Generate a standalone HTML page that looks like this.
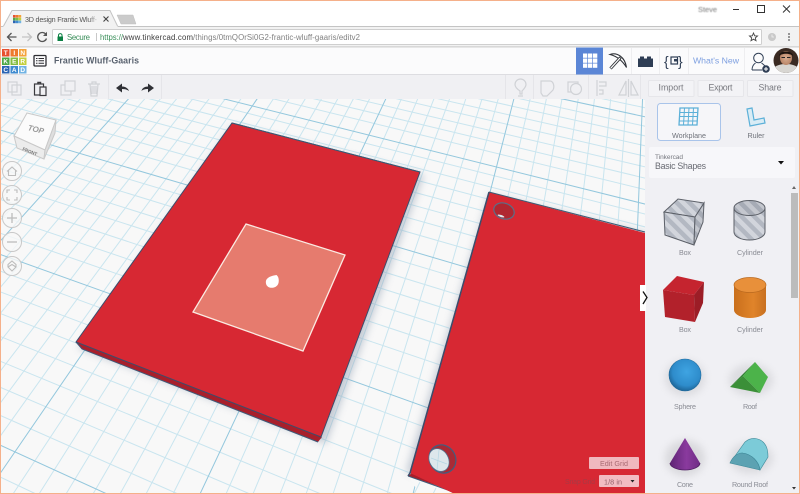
<!DOCTYPE html>
<html><head><meta charset="utf-8"><title>3D design Frantic Wluff-Gaaris</title>
<style>
html,body{margin:0;padding:0;background:#fff;width:800px;height:494px;overflow:hidden}
svg{display:block}
text{font-family:"Liberation Sans",sans-serif;white-space:pre}
</style></head><body>
<svg width="800" height="494" viewBox="0 0 800 494" xmlns="http://www.w3.org/2000/svg">
<defs>
<filter id="b6" x="-30%" y="-30%" width="160%" height="160%"><feGaussianBlur stdDeviation="4"/></filter>
<filter id="b3" x="-50%" y="-50%" width="200%" height="200%"><feGaussianBlur stdDeviation="4"/></filter>
<filter id="bt"><feGaussianBlur stdDeviation="0.5"/></filter>
<pattern id="st" width="9" height="9" patternUnits="userSpaceOnUse" patternTransform="rotate(-45)"><rect width="9" height="9" fill="#d2d5dc"/><rect width="4.500" height="9" fill="#b3b8c2"/></pattern>
<pattern id="st2" width="9" height="9" patternUnits="userSpaceOnUse" patternTransform="rotate(-45)"><rect width="9" height="9" fill="#c4c7ce"/><rect width="4.500" height="9" fill="#a6abb5"/></pattern>
<radialGradient id="sph" cx="0.55" cy="0.4" r="0.62"><stop offset="0" stop-color="#3fa4e2"/><stop offset="0.7" stop-color="#2e8ccb"/><stop offset="1" stop-color="#1c6293"/></radialGradient>
<linearGradient id="con" x1="0" x2="1" y1="0" y2="0"><stop offset="0" stop-color="#5e2474"/><stop offset="0.55" stop-color="#8a3a9e"/><stop offset="1" stop-color="#6f2c85"/></linearGradient>
<linearGradient id="cyl" x1="0" x2="1" y1="0" y2="0"><stop offset="0" stop-color="#c96f1c"/><stop offset="0.6" stop-color="#e0842a"/><stop offset="1" stop-color="#c87020"/></linearGradient>
<linearGradient id="fade" x1="0" x2="1" y1="0" y2="0"><stop offset="0" stop-color="#f2f2f2" stop-opacity="0"/><stop offset="1" stop-color="#f2f2f2"/></linearGradient>
<radialGradient id="face" cx="0.5" cy="0.5" r="0.5"><stop offset="0" stop-color="#d8ad90"/><stop offset="1" stop-color="#b98568"/></radialGradient>
<clipPath id="av"><circle cx="786" cy="60.500" r="12.500"/></clipPath>
</defs>

<!-- canvas -->
<rect width="800" height="494" fill="#f8f8f8"/>
<path fill="none" stroke="#c9e5ef" stroke-width="1" d="M666-497L-441 494M666-497L-415 494M666-497L-388 494M666-497L-362 494M666-497L-334 494M666-497L-308 494M666-497L-281 494M666-497L-254 494M666-497L-201 494M666-497L-175 494M666-497L-148 494M666-497L-121 494M666-497L-94 494M666-497L-67 494M666-497L-41 494M666-497L13 494M666-497L39 494M666-497L66 494M666-497L93 494M666-497L120 494M666-497L146 494M666-497L173 494M666-497L226 494M666-497L253 494M666-497L280 494M666-497L306 494M666-497L333 494M666-497L360 494M666-497L387 494M666-497L440 494M666-497L467 494M666-497L493 494M666-497L520 494M666-497L547 494M666-497L574 494M666-497L600 494M666-497L654 494M666-497L680 494
M-1938-441L-36 494M-1938-441L36 494M-1938-441L178 494M-1938-441L250 494M-1938-441L321 494M-1938-441L393 494M-1938-441L464 494M-1938-441L535 494M-1938-441L607 494M-1938-441L750 494M-1938-441L821 494M-1938-441L892 494M-1938-441L964 494M-1938-441L1035 494M-1938-441L1107 494M-1938-441L1178 494M-1938-441L1321 494M-1938-441L1392 494M-1938-441L1464 494M-1938-441L1535 494M-1938-441L1606 494M-1938-441L1678 494M-1938-441L1749 494M-1938-441L1892 494M-1938-441L1963 494M-1938-441L2035 494M-1938-441L2106 494M-1938-441L2178 494M-1938-441L2249 494M-1938-441L2320 494M-1938-441L2463 494M-1938-441L2535 494M-1938-441L2606 494M-1938-441L2677 494"/>
<path fill="none" stroke="#93c7dd" stroke-width="1" d="M666-497L-228 494M666-497L-14 494M666-497L200 494M666-497L413 494M666-497L627 494M-1938-441L107 494M-1938-441L668 494M-1938-441L1236 494M-1938-441L1806 494M-1938-441L2392 494"/>

<!-- shadows -->
<polygon points="232,126 424,175 326,444 78,348" fill="#7f8fa6" opacity=".42" filter="url(#b6)"/>
<polygon points="489,194 650,234 650,494 470,494 406,472" fill="#7f8fa6" opacity=".42" filter="url(#b6)"/>

<!-- left plate -->
<polygon points="76,342 82,349 318,442 322,437" fill="#a81f2b"/>
<path d="M76,342 L82,349 L318,442" fill="none" stroke="#3f5a78" stroke-width="1"/>
<polygon points="232,123 420,172 321,437 76,342" fill="#d72833" stroke="#3b4d6c" stroke-width="1"/>
<path d="M232,123 L420,172" stroke="#3a5a74" stroke-width="1"/>
<polygon points="246,224 345,255 303,351 193,312" fill="#e67b6e" stroke="#fbeae2" stroke-width="1.300"/>
<path d="M276.500,275 C279,277 279,280.500 278.500,283 C277.500,287 273,288.500 269.500,287.500 C266,286.500 265,282 266.500,279.500 C268.500,276.500 273,275.500 276.500,275Z" fill="#fff"/>

<!-- right plate -->
<polygon points="408,476 462,494 420,494" fill="#f8f8f8"/>
<path d="M420 482L414 494M436 488L433 494" stroke="#c9e5ef" stroke-width="1"/>
<polygon points="408,476 412,473 455,494 462,494" fill="#a81f2b"/>
<path d="M408,476 L459,494" stroke="#3f5a78" stroke-width="1" fill="none"/>
<polygon points="489,192 645,233 645,494 455,494 410,473" fill="#d72833"/>
<path d="M489,192 L410,473 L408,476" fill="none" stroke="#3b4d6c" stroke-width="1.500"/>
<path d="M489,192 L645,232" fill="none" stroke="#3a5a74" stroke-width="1"/>
<g transform="rotate(20 504 211)"><ellipse cx="504" cy="211" rx="10.500" ry="7.800" fill="#b02731" stroke="#5a6f88" stroke-width="1.200"/></g>
<ellipse cx="501" cy="216" rx="3.500" ry="1" transform="rotate(18 501 216)" fill="#dfe9ee"/>
<ellipse cx="442.500" cy="459" rx="13" ry="14.500" transform="rotate(-30 442.500 459)" fill="#a92a35" stroke="#3f5f80" stroke-width="1.200"/>
<ellipse cx="439" cy="460" rx="9.500" ry="12" transform="rotate(-30 439 460)" fill="#dde7ec" stroke="#55708c" stroke-width=".800"/>
<path d="M439 450L437 470M431 458L447 464" stroke="#b5d6e4" stroke-width=".700"/>

<!-- grid controls -->
<rect x="589" y="457" width="50" height="12" rx="1" fill="#f0b8be"/>
<text x="614" y="466" font-size="7.200" fill="#a86a72" text-anchor="middle" textLength="28">Edit Grid</text>
<text x="565" y="484" font-size="7" fill="#a83a45" textLength="30">Snap Grid</text>
<rect x="599" y="475" width="40" height="12" rx="1" fill="#f2bcc2"/>
<text x="604" y="484.500" font-size="7.200" fill="#94606a" textLength="18">1/8 in</text>
<path d="M630.500 480h4l-2 2.500z" fill="#222"/>

<!-- view cube -->
<polygon points="27,113 56,120 45,150 14,136" fill="#fbfbfb" stroke="#c9c9c9" stroke-width="1"/>
<polygon points="14,136 45,150 44,159 17,148" fill="#ececec" stroke="#c9c9c9" stroke-width="1"/>
<polygon points="56,120 45,150 44,159 55,133" fill="#dedede" stroke="#c9c9c9" stroke-width="1"/>
<text x="36" y="132" font-size="8" font-style="italic" font-weight="bold" fill="#9a9a9a" text-anchor="middle" transform="rotate(14 36 129)">TOP</text>
<text x="30" y="153" font-size="4.500" font-weight="bold" fill="#777" text-anchor="middle" transform="rotate(22 30 151)">FRONT</text>

<!-- nav circles -->
<g fill="#f8f8f8" fill-opacity=".8" stroke="#c8c8c8" stroke-width="1">
<circle cx="12" cy="171" r="9.500"/><circle cx="12" cy="195" r="9.500"/><circle cx="12" cy="218" r="9.500"/><circle cx="12" cy="242" r="9.500"/><circle cx="12" cy="266" r="9.500"/>
</g>
<g fill="none" stroke="#bcbcbc" stroke-width="1.100">
<path d="M7 171.500L12 167L17 171.500M8.500 170.500V175.500H15.500V170.500"/>
<path d="M7 193V190H10M14 190H17V193M17 197V200H14M10 200H7V197"/>
<path d="M7 218H17M12 213V223" stroke-width="1.300"/>
<path d="M7 242H17" stroke-width="1.300"/>
<path d="M12 261L16 264.500V267L12 271L8 267V264.500ZM8 267L12 264.500L16 267"/>
</g>

<!-- right panel -->
<rect x="645" y="99" width="155" height="395" fill="#f0f0f4"/>
<rect x="640" y="285" width="6" height="26" fill="#fff"/>
<path d="M643 291.500L647 297.500L643 304" fill="none" stroke="#111" stroke-width="1.300"/>
<rect x="657.500" y="103.500" width="63" height="37" rx="3" fill="#f6f6f9" stroke="#a9c4ea" stroke-width="1"/>
<g fill="none" stroke="#5cb0d8" stroke-width="1">
<polygon points="680,108 698,108 697,125 679,125" stroke-width="1.300"/>
<path d="M684.500 108L683.500 125M689 108L688 125M693.500 108L692.500 125M680 112.500H698M680 116.500H697.500M679.500 121H697"/>
</g>
<path d="M747 109L752 108L754 120L764 118L765 123L750 126Z" fill="#d9ecf5" stroke="#5cb0d8" stroke-width="1.200"/>
<text x="689" y="138" font-size="7.200" fill="#6f727a" text-anchor="middle" textLength="34">Workplane</text>
<text x="756" y="138" font-size="7.200" fill="#6f727a" text-anchor="middle" textLength="17">Ruler</text>
<rect x="649" y="147" width="146" height="31" rx="2" fill="#f7f7fa"/>
<text x="655" y="159" font-size="6.500" fill="#75777e" textLength="28">Tinkercad</text>
<text x="655" y="169" font-size="8.800" fill="#686a72" textLength="51">Basic Shapes</text>
<path d="M778 161h6l-3 3.500z" fill="#111"/>
<path d="M792 189l2-3 2 3z" fill="#666"/>
<path d="M792 487l2 2.500 2-2.500z" fill="#333"/>
<rect x="791" y="193" width="7" height="105" fill="#bcbcbc"/>

<!-- shapes -->
<g stroke="#5c6068" stroke-width="1">
<polygon points="664,212 678,199 704,203 695,217" fill="url(#st)"/>
<polygon points="664,212 695,217 694,245 665,235" fill="url(#st)"/>
<polygon points="695,217 704,203 703,222 694,245" fill="url(#st2)"/>
<path d="M734 208V232A15.500 8 0 0 0 765 232V208Z" fill="url(#st)"/>
<ellipse cx="749.500" cy="208" rx="15.500" ry="7.500" fill="url(#st2)"/>
</g>
<text x="685" y="255" font-size="7.200" fill="#8a8c94" text-anchor="middle" textLength="12">Box</text>
<text x="750" y="255" font-size="7.200" fill="#8a8c94" text-anchor="middle" textLength="26">Cylinder</text>

<polygon points="663,290 677,276 704,282 694,295" fill="#c5242f"/>
<polygon points="663,290 694,295 695,322 665,317" fill="#b2212b"/>
<polygon points="694,295 704,282 703,303 695,322" fill="#9c1d26"/>
<path d="M734 285V310A16 8 0 0 0 766 310V285Z" fill="url(#cyl)"/>
<ellipse cx="750" cy="285" rx="16" ry="7.500" fill="#e8903a" stroke="#b9691f" stroke-width=".700"/>
<text x="685" y="332" font-size="7.200" fill="#8a8c94" text-anchor="middle" textLength="12">Box</text>
<text x="750" y="332" font-size="7.200" fill="#8a8c94" text-anchor="middle" textLength="26">Cylinder</text>

<ellipse cx="685" cy="378" rx="20" ry="18" fill="#dcdce0" filter="url(#b3)"/>
<circle cx="685" cy="375" r="16" fill="url(#sph)" stroke="#1f6a9c" stroke-width=".600"/>
<ellipse cx="751" cy="380" rx="22" ry="16" fill="#dcdce0" filter="url(#b3)"/>
<polygon points="730,387 755,362 743,376" fill="#2f7f30"/>
<polygon points="743,376 755,362 768,377 760,393" fill="#4cb34a"/>
<polygon points="730,387 743,376 760,393" fill="#3b8f38"/>
<text x="685" y="409" font-size="7.200" fill="#8a8c94" text-anchor="middle" textLength="22">Sphere</text>
<text x="750" y="409" font-size="7.200" fill="#8a8c94" text-anchor="middle" textLength="14">Roof</text>

<ellipse cx="685" cy="458" rx="20" ry="18" fill="#d9d9dd" filter="url(#b3)"/>
<path d="M685 438L670 463A15 7 0 0 0 700 463Z" fill="url(#con)"/>
<path d="M670 463A15 7 0 0 0 700 463" fill="none" stroke="#4d1c60" stroke-width=".800"/>
<ellipse cx="751" cy="458" rx="22" ry="16" fill="#dcdce0" filter="url(#b3)"/>
<path d="M730 463L745 442C752 436 762 438 766 446C768 450 768 454 768 457L760 470C759 462 752 454 742 453Z" fill="#7ccbd8" stroke="#3f8a9a" stroke-width=".600"/>
<path d="M730 463C733 456 738 453 742 453C752 454 759 462 760 470Z" fill="#5ca2b2" stroke="#3f8a9a" stroke-width=".600"/>
<text x="685" y="487" font-size="7.200" fill="#8a8c94" text-anchor="middle" textLength="16">Cone</text>
<text x="750" y="487" font-size="7.200" fill="#8a8c94" text-anchor="middle" textLength="36">Round Roof</text>

<!-- toolbar -->
<rect x="0" y="74" width="800" height="25" fill="#f0f0f3"/>
<path d="M0 74.500H800" stroke="#dddde1"/>
<path d="M108.500 75V99M161.500 75V99M505.500 75V99M533.500 75V99M588.500 75V99M640.500 75V99" stroke="#e5e5e9"/>
<g fill="none" stroke="#d0d2d6" stroke-width="1.200">
<rect x="8" y="82" width="9" height="10"/><rect x="12" y="85" width="9" height="10"/>
<rect x="61" y="85" width="10" height="10"/><rect x="65" y="81" width="10" height="10" fill="#f0f0f3"/>
<path d="M88 84H100M90 84L91 96H97L98 84M92 84V82H96V84M92 86V94M94 86V94M96 86V94"/>
<path d="M520 94V91C517 89 515 87 515 84.500A5.500 5.500 0 0 1 526 84.500C526 87 524 89 522 91V94ZM518 96H523"/>
<path d="M541 81H550C553 81 555 86 553 90L547 96H543L541 93Z"/>
<rect x="568" y="82" width="10" height="10"/><circle cx="576" cy="89" r="5.500" fill="#f0f0f3"/>
<path d="M597 80V96M599 82H606V86H599M599 90H603V94H599"/>
<path d="M619 95L626 81V95ZM631 95V81L638 95ZM628.500 79V97"/>
</g>
<g fill="none" stroke="#3a3a3e" stroke-width="1.200">
<rect x="34.500" y="84" width="9" height="11"/>
<path d="M38 84V82.500H40.500V84" stroke-width="1.500"/>
<rect x="40" y="87" width="6" height="8.500" fill="#f0f0f3"/>
</g>
<path d="M116 88L122 83.500V86.500C125 86.500 128 88 129 91C127 89.500 125 89 122 89V92.500Z" fill="#2f3035"/>
<path d="M154 88L148 83.500V86.500C145 86.500 142 88 141.500 91C143 89.500 145 89 148 89V92.500Z" fill="#2f3035"/>
<g fill="#f3f3f6" stroke="#e6e6ea">
<rect x="648.500" y="80.500" width="45.500" height="16" rx="1"/><rect x="698" y="80.500" width="45.500" height="16" rx="1"/><rect x="747.500" y="80.500" width="45.500" height="16" rx="1"/>
</g>
<text x="671" y="90.500" font-size="8.800" fill="#78797f" text-anchor="middle" textLength="25">Import</text>
<text x="720.500" y="90.500" font-size="8.800" fill="#78797f" text-anchor="middle" textLength="24">Export</text>
<text x="770" y="90.500" font-size="8.800" fill="#78797f" text-anchor="middle" textLength="23">Share</text>

<!-- tinkercad header -->
<rect x="0" y="47" width="800" height="27" fill="#fbfbfc"/>
<path d="M0 47.500H800" stroke="#dadada"/>
<g font-size="6.500" font-weight="bold" fill="#fff" text-anchor="middle">
<rect x="2" y="49" width="7.500" height="7.500" fill="#e8502f"/><rect x="10.500" y="49" width="7.500" height="7.500" fill="#ee7a2b"/><rect x="19" y="49" width="7.500" height="7.500" fill="#f4a23a"/>
<rect x="2" y="57.500" width="7.500" height="7.500" fill="#4fa845"/><rect x="10.500" y="57.500" width="7.500" height="7.500" fill="#84bd41"/><rect x="19" y="57.500" width="7.500" height="7.500" fill="#c3d03f"/>
<rect x="2" y="66" width="7.500" height="7.500" fill="#2c65b4"/><rect x="10.500" y="66" width="7.500" height="7.500" fill="#3f8bd0"/><rect x="19" y="66" width="7.500" height="7.500" fill="#71b3e4"/>
<text x="5.750" y="55">T</text><text x="14.250" y="55">I</text><text x="22.750" y="55">N</text>
<text x="5.750" y="63.500">K</text><text x="14.250" y="63.500">E</text><text x="22.750" y="63.500">R</text>
<text x="5.750" y="72">C</text><text x="14.250" y="72">A</text><text x="22.750" y="72">D</text>
</g>
<rect x="34" y="55.500" width="12" height="10.500" rx="1" fill="none" stroke="#2d2d33" stroke-width="1.300"/>
<path d="M36 58.500h1.500M36 60.800h1.500M36 63.200h1.500M38.500 58.500h5.500M38.500 60.800h5.500M38.500 63.200h5.500" stroke="#2d2d33" stroke-width="1"/>
<text x="54" y="63.500" font-size="8.800" font-weight="bold" fill="#59626f" textLength="85">Frantic Wluff-Gaaris</text>

<rect x="576" y="47.500" width="27" height="27" fill="#5b86d6"/>
<g fill="#fff"><rect x="583" y="53.500" width="4.300" height="4.300"/><rect x="588" y="53.500" width="4.300" height="4.300"/><rect x="593" y="53.500" width="4.300" height="4.300"/><rect x="583" y="58.500" width="4.300" height="4.300"/><rect x="588" y="58.500" width="4.300" height="4.300"/><rect x="593" y="58.500" width="4.300" height="4.300"/><rect x="583" y="63.500" width="4.300" height="4.300"/><rect x="588" y="63.500" width="4.300" height="4.300"/><rect x="593" y="63.500" width="4.300" height="4.300"/></g>
<path d="M631.500 48V74M659.500 48V74M688.500 48V74M744.500 48V74" stroke="#eeeef0"/>
<path d="M610 54.500C617 52 625 57 626.500 67.500C622 60 616 56 610 54.500Z" fill="#fff" stroke="#2f3238" stroke-width="1.100"/>
<path d="M610.500 68.500L620.500 57.500" stroke="#2f3238" stroke-width="3"/>
<path d="M610.800 68.200L620 58" stroke="#fff" stroke-width="1.200"/>
<path d="M638 67V58.500H640V56.500H644V58.500H647V56.500H651V58.500H653V67Z" fill="#2f3e55"/>
<text x="664" y="66" font-size="14" fill="#2f3e55">{</text>
<text x="678" y="66" font-size="14" fill="#2f3e55">}</text>
<rect x="671" y="57" width="6.500" height="7" fill="none" stroke="#2f3e55" stroke-width="1.200"/>
<path d="M674 59h3v2.500h-3z" fill="#2f3e55"/>
<text x="693" y="63.500" font-size="8.700" fill="#7d9fe0" textLength="46">What's New</text>
<circle cx="758.500" cy="58" r="4.800" fill="none" stroke="#2f3e55" stroke-width="1"/>
<path d="M752 70C752 66 754 64 755.500 63M761.500 63C763 64 764 65 765 66M752 70H762" fill="none" stroke="#2f3e55" stroke-width="1"/>
<circle cx="766" cy="69" r="3.800" fill="#2f3e55"/>
<path d="M764 69H768M766 67V71" stroke="#fff" stroke-width="1"/>
<g clip-path="url(#av)">
<rect x="773" y="48" width="26" height="26" fill="#3a2a22"/>
<path d="M773 74V68C777 65 782 64 786 64C790 64 795 65 799 68V74Z" fill="#d8d6d2"/>
<ellipse cx="786" cy="58" rx="6" ry="7" fill="url(#face)"/>
<path d="M779 56C779 50 793 50 793 56C790 53 782 53 779 56Z" fill="#1d140f"/>
<path d="M781.500 57.500h3.500M787 57.500h3.500" stroke="#222" stroke-width="1"/>
</g>

<!-- chrome -->
<rect x="0" y="0" width="800" height="27" fill="#ffffff"/>
<path d="M3 27L12 10.500H110L118 27" fill="#f2f2f2" stroke="#c4c4c4" stroke-width="1"/>
<polygon points="117,15 133,15 136,24 121,24" fill="#cbcbcb" stroke="#c0c0c0" stroke-width=".500"/>
<rect x="0" y="26.500" width="800" height="21" fill="#f2f2f2"/>
<path d="M0 26.500H3M118 26.500H800" stroke="#c4c4c4"/>
<path d="M0 46.500H800" stroke="#d8d8d8"/>
<g>
<rect x="13" y="15" width="2.600" height="2.600" fill="#e8502f"/><rect x="15.800" y="15" width="2.600" height="2.600" fill="#ee7a2b"/><rect x="18.600" y="15" width="2.600" height="2.600" fill="#f4a23a"/>
<rect x="13" y="17.800" width="2.600" height="2.600" fill="#4fa845"/><rect x="15.800" y="17.800" width="2.600" height="2.600" fill="#84bd41"/><rect x="18.600" y="17.800" width="2.600" height="2.600" fill="#c3d03f"/>
<rect x="13" y="20.600" width="2.600" height="2.600" fill="#2c65b4"/><rect x="15.800" y="20.600" width="2.600" height="2.600" fill="#3f8bd0"/><rect x="18.600" y="20.600" width="2.600" height="2.600" fill="#71b3e4"/>
</g>
<text x="25" y="22" font-size="7.200" fill="#555" textLength="72">3D design Frantic Wluff-</text>
<rect x="88" y="13" width="11" height="12" fill="url(#fade)"/>
<path d="M103.500 16.500L108.500 21.500M108.500 16.500L103.500 21.500" stroke="#444" stroke-width="1.100"/>
<text x="698" y="12" font-size="7.500" fill="#777" textLength="19" filter="url(#bt)">Steve</text>
<path d="M733 9.500H739" stroke="#333" stroke-width="1"/>
<rect x="757.500" y="5.500" width="7" height="7" fill="none" stroke="#333" stroke-width="1"/>
<path d="M783 5.500L790 12.500M790 5.500L783 12.500" stroke="#333" stroke-width="1"/>

<path d="M14.500 37H5.500M9.500 33L5.500 37L9.500 41" fill="none" stroke="#555" stroke-width="1.300" transform="translate(2 0)"/>
<path d="M22 37H31M27.500 33L31.500 37L27.500 41" fill="none" stroke="#c4c4c4" stroke-width="1.300"/>
<path d="M46 34.500A4.500 4.500 0 1 0 46.500 38.500" fill="none" stroke="#555" stroke-width="1.300"/>
<path d="M47 31.800V36H43Z" fill="#555"/>
<rect x="52.500" y="29.500" width="709" height="15" rx="1" fill="#fff" stroke="#cfcfcf"/>
<rect x="57.500" y="36.500" width="5.500" height="4.500" fill="#0b8043"/>
<path d="M58.500 36.500V35A1.800 1.800 0 0 1 62 35V36.500" fill="none" stroke="#0b8043" stroke-width="1"/>
<text x="67" y="40" font-size="7.800" fill="#3a8f5a" textLength="23">Secure</text>
<path d="M96.500 33V41" stroke="#c8c8c8"/>
<text x="100" y="40" font-size="7.800" fill="#3a8f5a" textLength="23">https://</text>
<text x="123" y="40" font-size="7.800" fill="#3c3c3c" textLength="70">www.tinkercad.com</text>
<text x="193" y="40" font-size="7.800" fill="#808080" textLength="167">/things/0tmQOrSi0G2-frantic-wluff-gaaris/editv2</text>
<path d="M753.500 33L754.700 35.800L757.500 36L755.300 37.900L756 40.700L753.500 39.200L751 40.700L751.700 37.900L749.500 36L752.300 35.800Z" fill="none" stroke="#444" stroke-width=".900"/>
<circle cx="772" cy="37" r="4" fill="#c9c9c9"/>
<path d="M772 34.500V37H774" stroke="#f2f2f2" stroke-width=".800" fill="none"/>
<g fill="#555"><circle cx="789" cy="34" r=".900"/><circle cx="789" cy="37" r=".900"/><circle cx="789" cy="40" r=".900"/></g>

<!-- window border -->
<rect x="0" y="0" width="800" height="1" fill="#f5b08a"/>
<rect x="0" y="0" width="1" height="494" fill="#f5b08a"/>
<rect x="799" y="0" width="1" height="494" fill="#f5b08a"/>
<rect x="0" y="493" width="800" height="1" fill="#f5b08a"/>
</svg>
</body></html>
